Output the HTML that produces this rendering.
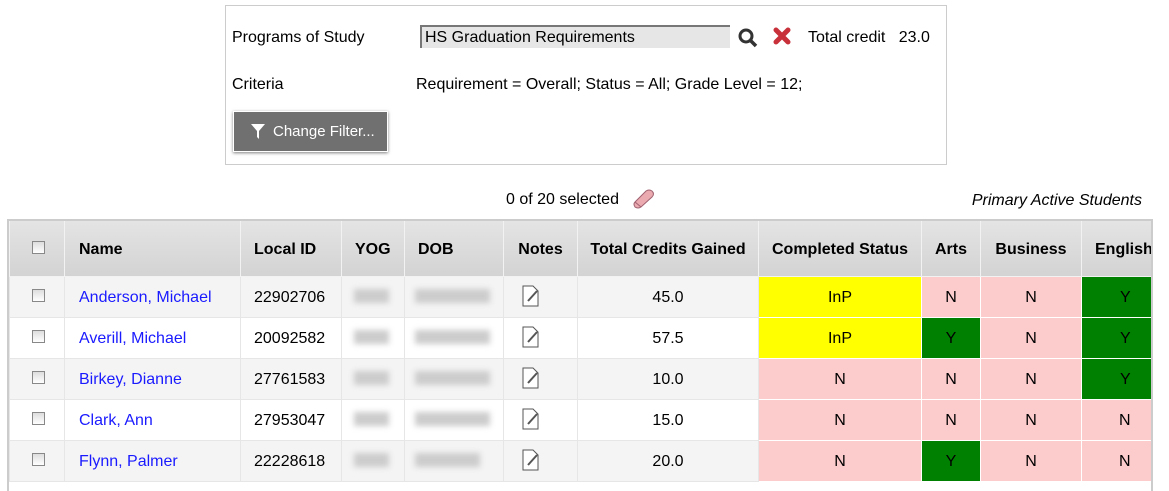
<!DOCTYPE html>
<html><head><style>
body{margin:0;width:1169px;height:478px;overflow:hidden;background:#fff;font-family:"Liberation Sans",Arial,sans-serif;font-size:16px;color:#000;position:relative}
.a{position:absolute;white-space:nowrap}
.box{position:absolute;left:225px;top:5px;width:720px;height:158px;border:1px solid #ccc}
.inp{position:absolute;left:420px;top:25px;width:305px;height:21px;background:#e6e6e6;border-top:2px solid #777;border-left:2px solid #777;padding-left:3px;line-height:22px}
.btn{position:absolute;left:233px;top:111px;width:155px;height:41px;background:#707070;color:#fff;box-shadow:0 1px 3px rgba(0,0,0,.5);border:1px solid #fff;box-sizing:border-box;font-size:15px;line-height:40px}
.wrap{position:absolute;left:7px;top:219px;width:1142px;height:270px;overflow:hidden;border:2px solid #ccc;border-bottom:none}
table{border-collapse:collapse;table-layout:fixed;width:1200px}
td,th{padding:0;border:1px solid #e6e6e6;white-space:nowrap;overflow:hidden}
th{height:52px;background:linear-gradient(#e4e4e4,#d3d3d3);font-weight:bold;text-align:left;border-color:#f2f2f2;border-top:none;padding-top:3px}
td{height:38px;padding-top:2px}
tr.o td{background:#f4f4f4}
.c{text-align:center}
.p{background:#fccbcb!important;text-align:center;border-color:#fff}
.y{background:#ffff00!important;text-align:center;border-color:#fff}
.g{background:#008000!important;text-align:center;border-color:#fff}
.cb{display:inline-block;width:11px;height:11px;border:1px solid #888;background:linear-gradient(#ddd,#fff);margin-left:22px}
a{color:#1a1aff;text-decoration:none}
.bl{display:inline-block;height:14px;background:#ccc;filter:blur(3px)}
</style></head><body>
<div class="box"></div>
<div class="a" style="left:232px;top:29px">Programs of Study</div>
<div class="inp">HS Graduation Requirements</div>
<svg class="a" style="left:737px;top:27px" width="22" height="22"><circle cx="9" cy="9" r="6" fill="none" stroke="#333" stroke-width="3"/><line x1="13" y1="13" x2="19" y2="19" stroke="#333" stroke-width="3.5"/></svg>
<svg class="a" style="left:773px;top:27px" width="18" height="18"><path d="M3 3L15 15M15 3L3 15" stroke="#c8303a" stroke-width="5" stroke-linecap="round"/></svg>
<div class="a" style="left:808px;top:29px">Total credit&nbsp;&nbsp;&nbsp;23.0</div>
<div class="a" style="left:232px;top:76px">Criteria</div>
<div class="a" style="left:416px;top:76px">Requirement = Overall; Status = All; Grade Level = 12;</div>
<div class="btn"><svg style="position:absolute;left:17px;top:12px" width="14" height="16"><path d="M0 0H14L8 7V15L6 13V7Z" fill="#fff"/></svg><span style="position:absolute;left:39px">Change Filter...</span></div>
<div class="a" style="left:506px;top:191px">0 of 20 selected</div>
<svg class="a" style="left:632px;top:188px" width="24" height="22"><path d="M3 14L14 3Q17 1 20 3Q23 6 20 9L9 19Q6 21 3 19Q1 16 3 14Z" fill="#eaaab0" stroke="#a06070"/><path d="M3 14L9 19" stroke="#a06070"/></svg>
<div class="a" style="left:962px;top:192px;font-style:italic;width:180px;text-align:right">Primary Active Students</div>
<div class="wrap">
<table>
<colgroup><col style="width:55px"><col style="width:176px"><col style="width:101px"><col style="width:63px"><col style="width:99px"><col style="width:74px"><col style="width:181px"><col style="width:163px"><col style="width:59px"><col style="width:101px"><col style="width:128px"></colgroup>
<tr><th><span class="cb"></span></th><th style="padding-left:14px">Name</th><th style="padding-left:13px">Local ID</th><th style="padding-left:13px">YOG</th><th style="padding-left:13px">DOB</th><th class="c">Notes</th><th class="c">Total Credits Gained</th><th class="c">Completed Status</th><th class="c">Arts</th><th class="c">Business</th><th style="padding-left:13px">English</th></tr>
<tr class="o"><td><span class="cb"></span></td><td style="padding-left:14px"><a>Anderson, Michael</a></td><td style="padding-left:13px">22902706</td><td style="padding-left:12px"><span class="bl" style="width:35px"></span></td><td style="padding-left:10px"><span class="bl" style="width:75px"></span></td><td style="padding-left:18px"><svg width="18" height="22"><path d="M1 1H11L16 6V21H1Z" fill="#fff" stroke="#555"/><path d="M6 16L15 6" stroke="#555" stroke-width="2"/></svg></td><td class="c">45.0</td><td class="y">InP</td><td class="p">N</td><td class="p">N</td><td class="g" style="text-align:left;padding-left:38px">Y</td></tr>
<tr><td><span class="cb"></span></td><td style="padding-left:14px"><a>Averill, Michael</a></td><td style="padding-left:13px">20092582</td><td style="padding-left:12px"><span class="bl" style="width:35px"></span></td><td style="padding-left:10px"><span class="bl" style="width:75px"></span></td><td style="padding-left:18px"><svg width="18" height="22"><path d="M1 1H11L16 6V21H1Z" fill="#fff" stroke="#555"/><path d="M6 16L15 6" stroke="#555" stroke-width="2"/></svg></td><td class="c">57.5</td><td class="y">InP</td><td class="g">Y</td><td class="p">N</td><td class="g" style="text-align:left;padding-left:38px">Y</td></tr>
<tr class="o"><td><span class="cb"></span></td><td style="padding-left:14px"><a>Birkey, Dianne</a></td><td style="padding-left:13px">27761583</td><td style="padding-left:12px"><span class="bl" style="width:35px"></span></td><td style="padding-left:10px"><span class="bl" style="width:75px"></span></td><td style="padding-left:18px"><svg width="18" height="22"><path d="M1 1H11L16 6V21H1Z" fill="#fff" stroke="#555"/><path d="M6 16L15 6" stroke="#555" stroke-width="2"/></svg></td><td class="c">10.0</td><td class="p">N</td><td class="p">N</td><td class="p">N</td><td class="g" style="text-align:left;padding-left:38px">Y</td></tr>
<tr><td><span class="cb"></span></td><td style="padding-left:14px"><a>Clark, Ann</a></td><td style="padding-left:13px">27953047</td><td style="padding-left:12px"><span class="bl" style="width:35px"></span></td><td style="padding-left:10px"><span class="bl" style="width:75px"></span></td><td style="padding-left:18px"><svg width="18" height="22"><path d="M1 1H11L16 6V21H1Z" fill="#fff" stroke="#555"/><path d="M6 16L15 6" stroke="#555" stroke-width="2"/></svg></td><td class="c">15.0</td><td class="p">N</td><td class="p">N</td><td class="p">N</td><td class="p" style="text-align:left;padding-left:37px">N</td></tr>
<tr class="o"><td><span class="cb"></span></td><td style="padding-left:14px"><a>Flynn, Palmer</a></td><td style="padding-left:13px">22228618</td><td style="padding-left:12px"><span class="bl" style="width:35px"></span></td><td style="padding-left:10px"><span class="bl" style="width:65px"></span></td><td style="padding-left:18px"><svg width="18" height="22"><path d="M1 1H11L16 6V21H1Z" fill="#fff" stroke="#555"/><path d="M6 16L15 6" stroke="#555" stroke-width="2"/></svg></td><td class="c">20.0</td><td class="p">N</td><td class="g">Y</td><td class="p">N</td><td class="p" style="text-align:left;padding-left:37px">N</td></tr>
</table>
</div>
</body></html>
